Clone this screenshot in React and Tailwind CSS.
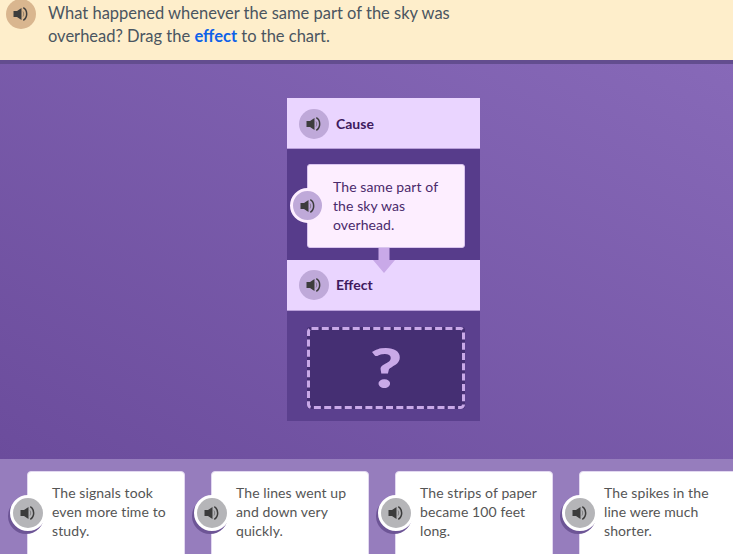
const font = { fontFamily: 'Lato, "Noto Sans", sans-serif' }

function SpeakerIcon() {
  return (
    <svg viewBox="0 0 16 16" className="w-4 h-4">
      <path d="M.5 5h3.500L8.500 2v12L4 11H.5z" fill="#3c3c3c" />
      <path d="M10 5.500c.9 1.600.9 3.400 0 5" fill="none" stroke="#3c3c3c" strokeOpacity=".45" strokeWidth="1" />
      <path d="M10.300 1.700c4.500 2.700 4.500 9.900 0 12.600" fill="none" stroke="#3c3c3c" strokeWidth="1.500" />
    </svg>
  )
}

function ChartHeader({ label, speakerClass = '', labelClass = '' }) {
  return (
    <div className="h-[51px] bg-[#ead5ff] border-b border-[#b99fd9] pl-3 flex items-center gap-[7px]">
      <div className={`w-[30px] h-[30px] rounded-full flex items-center justify-center shrink-0 bg-[#bfa9d9] ${speakerClass}`}>
        <SpeakerIcon />
      </div>
      <span className={`text-[14px] font-bold text-[#3f1a5e] ${labelClass}`} style={font}>{label}</span>
    </div>
  )
}

function AnswerCard({ lines }) {
  return (
    <div className="relative w-[158px] h-[100px] shrink-0 bg-white border border-[#e2d8f0] rounded-[4px] pl-[24px] pt-[11px] text-[14px] leading-[19px] tracking-[0.1px] text-[#555555]" style={font}>
      {lines.map((l) => <div key={l} className="whitespace-nowrap">{l}</div>)}
      <div className="absolute left-[-18px] top-[23px] w-[36px] h-[36px] rounded-full bg-[#b5b5b8] border-[3px] border-white flex items-center justify-center shadow-[-2px_3px_0_#6d5596]">
        <SpeakerIcon />
      </div>
    </div>
  )
}

const answers = [
  ['The signals took', 'even more time to', 'study.'],
  ['The lines went up', 'and down very', 'quickly.'],
  ['The strips of paper', 'became 100 feet', 'long.'],
  ['The spikes in the', 'line were much', 'shorter.'],
]

export default function App() {
  return (
    <div className="w-[733px] h-[554px] overflow-hidden flex flex-col" style={font}>
      {/* Prompt */}
      <div className="h-[64px] shrink-0 bg-[#feeecb] border-b-4 border-[#634d8f] flex items-start pl-[5px]">
        <div className="w-[30px] h-[30px] rounded-full bg-[#d9b68f] flex items-center justify-center -mt-[1px] ml-[1px]">
          <SpeakerIcon />
        </div>
        <p className="ml-[12px] pt-[2px] text-[16.5px] leading-[23px] text-[#4a5560] whitespace-nowrap">
          What happened whenever the same part of the sky was<br />
          overhead? Drag the <span className="font-bold text-[#0f62e8]">effect</span> to the chart.
        </p>
      </div>

      {/* Chart */}
      <div className="flex-1 bg-gradient-to-tr from-[#6b4c9c] to-[#8769b8] pt-[34px] pl-[287px]">
        <div className="w-[193px]">
          <ChartHeader label="Cause" speakerClass="mt-[1px]" />
          <div className="relative h-[111px] bg-[#573c8b] pt-[15px] pl-[20px]">
            <div className="relative w-[158px] h-[84px] bg-[#fdeeff] border border-[#d9c4ee] rounded-[3px] pl-[25px] pt-[12px] text-[14px] leading-[19px] tracking-[0.1px] text-[#4a2a6b]">
              <div className="whitespace-nowrap">The same part of</div>
              <div className="whitespace-nowrap">the sky was</div>
              <div className="whitespace-nowrap">overhead.</div>
              <div className="absolute left-[-18px] top-[23px] w-[35px] h-[35px] rounded-full bg-[#bfa9d9] border-[3px] border-[#fdeeff] flex items-center justify-center">
                <SpeakerIcon />
              </div>
            </div>
            <svg viewBox="0 0 22 25" className="absolute left-[86px] top-[99px] w-[22px] h-[25px] z-10">
              <path d="M5.500 0h11v12H22L11 25 0 12h5.500z" fill="#c9a9e8" />
            </svg>
          </div>
          <ChartHeader label="Effect" labelClass="-mt-[1px]" />
          <div className="h-[110px] bg-[#5b408e] pt-[16px] pl-[20px]">
            <div className="relative w-[158px] h-[82px] bg-[#452f73] rounded-[3px] flex items-center justify-center">
              <svg viewBox="0 0 158 82" className="absolute inset-0 w-full h-full">
                <rect x="1.500" y="1.500" width="155" height="79" rx="3" fill="none" stroke="#c9a9e8" strokeWidth="3" strokeDasharray="7 3.300" />
              </svg>
              <span className="inline-block text-[56px] font-black leading-none text-[#c9a9e8] scale-x-125 -mt-[3px]">?</span>
            </div>
          </div>
        </div>
      </div>

      {/* Answer tray */}
      <div className="h-[95px] shrink-0 bg-[#967dbd] pt-[12px] pl-[27px] flex gap-[26px]">
        {answers.map((lines) => <AnswerCard key={lines[0]} lines={lines} />)}
      </div>
    </div>
  )
}
